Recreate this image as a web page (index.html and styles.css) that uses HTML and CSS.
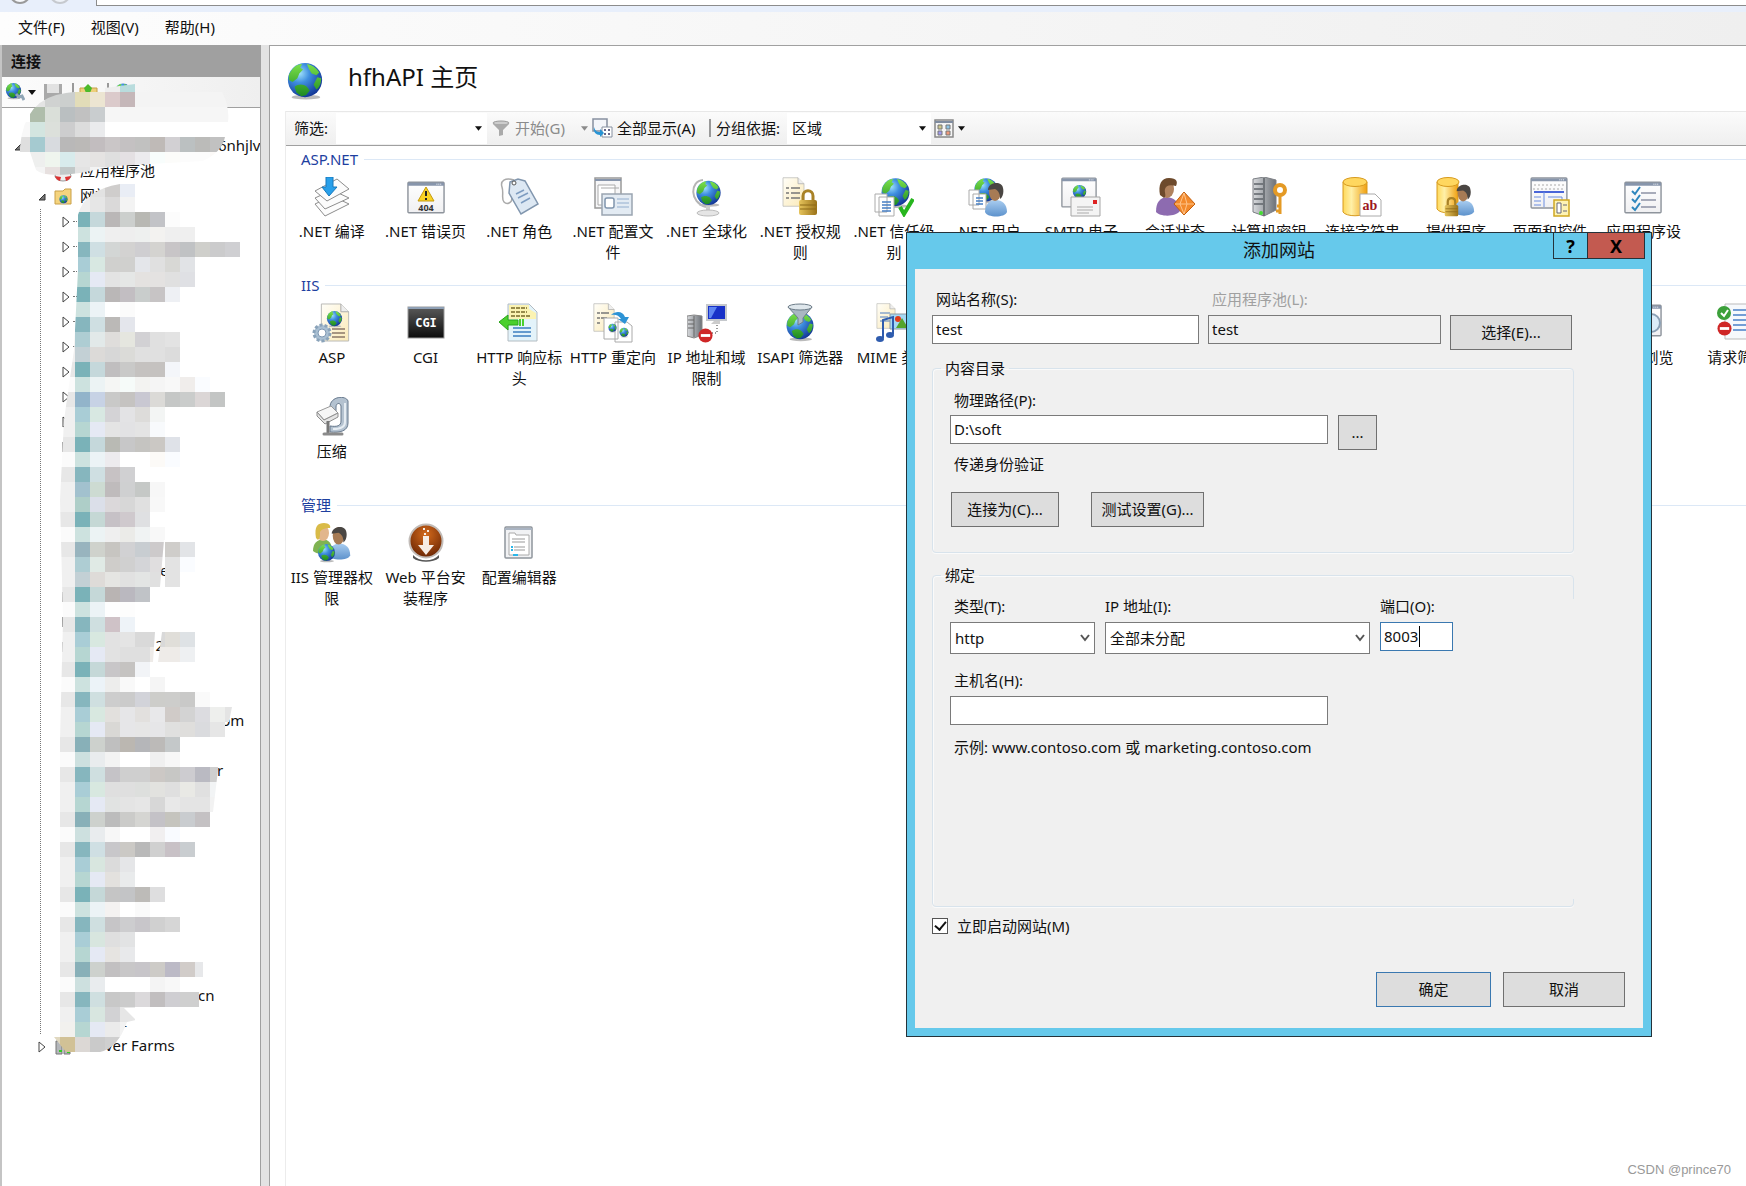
FILE: index.html
```html
<!DOCTYPE html>
<html lang="zh-CN">
<head>
<meta charset="utf-8">
<title>hfhAPI 主页</title>
<link rel="stylesheet" href="styles.css">
</head>
<body>
<svg class="defs" aria-hidden="true">
  <defs>
    <radialGradient id="sea" cx=".35" cy=".3" r=".8"><stop offset="0" stop-color="#9fe0fb"/><stop offset=".35" stop-color="#3f8fe0"/><stop offset="1" stop-color="#0c2a8c"/></radialGradient>
    <linearGradient id="land" x2="0" y2="1"><stop offset="0" stop-color="#7be04a"/><stop offset="1" stop-color="#1d8a22"/></linearGradient>
    <linearGradient id="gold" x2="1"><stop offset="0" stop-color="#ffd95a"/><stop offset=".35" stop-color="#fff0a8"/><stop offset="1" stop-color="#f0a010"/></linearGradient>
    <linearGradient id="brass" x2="1"><stop offset="0" stop-color="#e6c45c"/><stop offset="1" stop-color="#9a7218"/></linearGradient>
    <linearGradient id="steel" x2="1"><stop offset="0" stop-color="#d8dadd"/><stop offset="1" stop-color="#6d7278"/></linearGradient>
    <linearGradient id="cream" x2="1" y2="1"><stop offset="0" stop-color="#fffef8"/><stop offset="1" stop-color="#fbeab8"/></linearGradient>
    <linearGradient id="win" x2="0" y2="1"><stop offset="0" stop-color="#fff"/><stop offset="1" stop-color="#f0f0f2"/></linearGradient>
    <linearGradient id="dark" x2="0" y2="1"><stop offset="0" stop-color="#5a5a5a"/><stop offset="1" stop-color="#0c0c0c"/></linearGradient>
    <linearGradient id="shirt" x2="0" y2="1"><stop offset="0" stop-color="#a9cdf0"/><stop offset="1" stop-color="#5d92cc"/></linearGradient>
    <radialGradient id="rust" cx=".5" cy=".3" r=".7"><stop offset="0" stop-color="#d46a1c"/><stop offset="1" stop-color="#6b2604"/></radialGradient>
    <symbol id="globe" viewBox="0 0 40 40">
      <ellipse cx="21" cy="37" rx="15" ry="2.500" fill="#bbb"/>
      <circle cx="20" cy="19" r="18" fill="url(#sea)"/>
      <path d="M3 14C6 6 12 2 17 2l-2 4 3 2-4 4-2 5-5 4-4-2zM22 2c5 1 10 4 13 9l-3 3-5-2-3-5zM33 16l4 1c0 6-2 10-5 12l-3-5zM9 26c4-3 9-3 13 0l3 4-4 5-5 1-5-4z" fill="url(#land)"/>
    </symbol>
    <symbol id="person" viewBox="0 0 24 36"><path d="M1 30c0-8 5-12 11-12s11 4 11 12c-2 6-20 6-22 0z" fill="url(#shirt)"/><ellipse cx="11" cy="10" rx="6" ry="9" fill="#a77b55"/><path d="M4 8C4 0 18-2 19 6c1 4 0 9-3 11 0-5-1-8-5-10z" fill="#4a4643"/></symbol>
    <symbol id="page" viewBox="0 0 30 40"><path d="M1 1h20l8 8v30H1z" fill="url(#cream)" stroke="#b9b9b5"/><path d="M21 1v8h8" fill="#eee" stroke="#aaa"/></symbol>
    <symbol id="lock" viewBox="0 0 20 28"><path d="M5 14V8c0-7 10-7 10 0v6" fill="none" stroke="#a98226" stroke-width="3"/><rect x="1" y="12" width="18" height="15" rx="2" fill="url(#brass)"/><path d="M2 17h16M2 21h16" stroke="#8b6816"/></symbol>
    <symbol id="window" viewBox="0 0 40 34"><rect x="1" y="1" width="38" height="32" rx="1" fill="url(#win)" stroke="#8e949c" stroke-width="1.500"/><path d="M1 3h38" stroke="#8795ab" stroke-width="3"/><path d="M31 3h6" stroke="#fff" stroke-dasharray="1 1"/></symbol>
    <symbol id="nodrop" viewBox="0 0 16 16"><circle cx="8" cy="8" r="7.500" fill="#cf2626"/><path d="M3 8h10" stroke="#fff" stroke-width="3"/></symbol>
    <symbol id="drop" viewBox="0 0 8 5"><path d="M0 0h8L4 5z" fill="currentColor"/></symbol>
    <symbol id="chev" viewBox="0 0 10 8"><path d="M1 1l4 5 4-5" fill="none" stroke="#555" stroke-width="2"/></symbol>
    <symbol id="shut" viewBox="0 0 8 12"><path d="M1 1v10l6-5z" fill="#fff" stroke="#444"/></symbol>
    <symbol id="open" viewBox="0 0 8 8"><path d="M7 1v6H1z" fill="#777" stroke="#333"/></symbol>
  </defs>
</svg>

<div class="app">
  <div class="navbar">
    <svg class="nav-buttons" viewBox="0 0 90 12" aria-hidden="true"><circle cx="20" cy="-7" r="10" fill="#f6f8fb" stroke="#999" stroke-width="2"/><circle cx="60" cy="-7" r="10" fill="#eef2f8" stroke="#c6c9ce" stroke-width="2"/></svg>
    <div class="address"></div>
  </div>
  <nav class="menu">
    <button>文件(F)</button><button>视图(V)</button><button>帮助(H)</button>
  </nav>

  <div class="body">
    <aside class="sidebar">
      <h2>连接</h2>
      <div class="side-tools">
        <svg width="20" height="20" viewBox="0 0 20 20"><use href="#globe" width="17" height="18"/><path d="M11 12l3 3 3-1 2 4" fill="none" stroke="#8fa5b5" stroke-width="3"/></svg>
        <svg width="8" height="5"><use href="#drop"/></svg>
        <svg class="save" width="20" height="18" viewBox="0 0 20 18"><path d="M1 1h18v16H1z" fill="#a9a9a9"/><path d="M4 1h12v9H4z" fill="#e2e2e2"/></svg>
        <span class="bar"></span>
        <svg width="19" height="16" viewBox="0 0 19 16"><path d="M1 4h17v11H1z" fill="#edcf7b" stroke="#c79f48"/><path d="M9 0l4 4-2 5H7L5 4z" fill="#4cba2b"/></svg>
        <span class="bar"></span>
        <svg width="18" height="18"><use href="#globe"/></svg>
      </div>
      <ul class="tree">
        <li class="row root"><svg width="8" height="8"><use href="#open"/></svg><span class="host">6nhjlvi</span></li>
        <li class="row pools"><svg width="18" height="20" viewBox="0 0 18 20"><ellipse cx="9" cy="14" rx="8" ry="5" fill="#eee" stroke="#999"/><path d="M1 14q1 4 5 5l1-4zM17 14q-1 4-5 5l-1-4z" fill="#d33"/></svg><span>应用程序池</span></li>
        <li class="row sites"><svg width="8" height="8"><use href="#open"/></svg><svg width="18" height="18" viewBox="0 0 18 18"><path d="M1 3l8 0 2-2h6v15H1z" fill="#f5d47e" stroke="#c9a048"/><use href="#globe" x="5" y="7" width="9" height="9"/></svg><span>网站</span></li>
        <li><ul class="site-list" id="site-list"></ul></li>
        <li class="row farms"><svg width="8" height="12"><use href="#shut"/></svg><svg width="18" height="16" viewBox="0 0 18 16"><path d="M2 2h6v13H2zM10 5h6v10h-6z" fill="#b4b7bb" stroke="#777"/><path d="M5 12h3M13 13h3" stroke="#3c2" stroke-width="2"/></svg><span>Server Farms</span></li>
      </ul>
    </aside>

    <main class="main">
      <header class="title"><svg width="38" height="40"><use href="#globe"/></svg><h1>hfhAPI 主页</h1></header>
      <div class="panel">
        <div class="toolbar">
          <label for="filter">筛选:</label>
          <span class="combo filter"><select id="filter"><option></option></select><svg width="7" height="5"><use href="#drop"/></svg></span>
          <button class="off go"><svg width="18" height="17" viewBox="0 0 18 17"><ellipse cx="9" cy="3" rx="8" ry="2" fill="#ccc" stroke="#999"/><path d="M1 4l6 6v6l4-1v-5l6-6z" fill="#aaa"/></svg>开始(G)<svg width="7" height="5"><use href="#drop"/></svg></button>
          <button class="all"><svg width="21" height="20" viewBox="0 0 21 20"><path d="M1 1h14v12H1z" fill="#f4f6fa" stroke="#8690a0" stroke-width="1.500"/><path d="M10 9h10v10H10z" fill="#fff" stroke="#8690a0"/><path d="M12 12h2m2 0h2m-6 4h2m2 0h2" stroke="#668" stroke-width="2"/><path d="M2 9c1 4 3 5 6 5v-3l4 4-4 4v-2c-4 0-7-3-6-8z" fill="#2894d4"/></svg>全部显示(A)</button>
          <span class="bar"></span>
          <label for="group">分组依据:</label>
          <span class="combo group"><select id="group"><option>区域</option></select><svg width="7" height="5"><use href="#drop"/></svg></span>
          <button class="view" aria-label="视图"><svg width="20" height="19" viewBox="0 0 20 19"><path d="M1 1h18v17H1z" fill="#f4f4f4" stroke="#888" stroke-width="1.500"/><path d="M1 3h18" stroke="#7f8ca0" stroke-width="2"/><g stroke="#777"><path d="M4 6h4v4H4z" fill="#cdc88a"/><path d="M12 6h4v4h-4z" fill="#8cc5e8"/><path d="M4 12h4v4H4z" fill="#a09af0"/><path d="M12 12h4v4h-4z" fill="#f0987a"/></g></svg><svg width="7" height="5"><use href="#drop"/></svg></button>
        </div>

        <section>
          <h3>ASP.NET</h3>
          <div class="features">
            <a href="#"><svg viewBox="0 0 40 40"><g fill="#fcfcfc" stroke="#8d8d8d"><path d="M3 27l17-8 17 8-24 12z"/><path d="M3 21l17-8 17 8-24 11z"/><path d="M3 14L25 2l12 10-22 12z"/></g><path d="M14 0h7v10h4l-8 9-7-9h4z" fill="#29a0ea" stroke="#1879bc"/></svg><span>.NET 编译</span></a>
            <a href="#"><svg viewBox="0 0 40 40"><use href="#window" x="1" y="4" width="38" height="33"/><path d="M20 10l8 14H12z" fill="#f9d323" stroke="#c49a10"/><path d="M20 14v5m0 2v2" stroke="#222" stroke-width="2"/><text x="20" y="34" text-anchor="middle" class="i404">404</text></svg><span>.NET 错误页</span></a>
            <a href="#"><svg viewBox="0 0 40 40"><path d="M15 3C6 0 1 4 3 10s-1 12 2 15 8 1 8-4" fill="none" stroke="#aaa" stroke-width="1.500"/><path d="M11 5l8-3 7 2 13 23-17 10L10 16z" fill="#dde8f3" stroke="#8196ae" stroke-width="1.500"/><path d="M17 17l8-4m-6 8l10-5m-7 10l9-5" stroke="#7d9cc0" stroke-width="1.500"/><circle cx="15" cy="6" r="2" fill="#fff" stroke="#555"/></svg><span>.NET 角色</span></a>
            <a href="#"><svg viewBox="0 0 40 40"><path d="M2 1h26v30H2z" fill="#f6f6f7" stroke="#999" stroke-width="1.500"/><path d="M2 3h26" stroke="#8795ab" stroke-width="2"/><path d="M5 8h17v20H5zM8 11h18" fill="#fff" stroke="#aaa"/><path d="M9 17h30v21H9z" fill="#e3ebf3" stroke="#9aa5b1" stroke-width="1.500"/><rect x="12" y="21" width="9" height="10" rx="2" fill="#fff" stroke="#8095ad" stroke-width="1.500"/><path d="M24 22h12m-12 4h12m-12 4h12" stroke="#93aece"/></svg><span>.NET 配置文<br>件</span></a>
            <a href="#"><svg viewBox="0 0 40 40"><path d="M16 3C3 4 2 25 19 30" fill="none" stroke="#b5b5b5" stroke-width="2"/><use href="#globe" x="8" y="2" width="27" height="29"/><path d="M19 29h4v5h-4z" fill="#ccc"/><ellipse cx="21" cy="36" rx="11" ry="3" fill="#e5e5e5" stroke="#bbb"/></svg><span>.NET 全球化</span></a>
            <a href="#"><svg viewBox="0 0 40 40"><use href="#page" x="2" y="0" width="23" height="30"/><path d="M6 11h3m2 0h9M6 16h3m2 0h9M6 21h3m2 0h9" stroke="#777" stroke-width="1.500"/><use href="#lock" x="18" y="11" width="20" height="28"/></svg><span>.NET 授权规<br>则</span></a>
            <a href="#"><svg viewBox="0 0 40 40"><use href="#globe" x="6" y="0" width="31" height="32"/><path d="M1 17h12v18H1zM5 20h15v19H5z" fill="#fff" stroke="#aaa"/><path d="M8 25h9m-9 3h9m-9 3h9m-9 3h9" stroke="#477fc4" stroke-width="1.500"/><path d="M26 30l4 7 9-15" fill="none" stroke="#27b51e" stroke-width="4"/></svg><span>.NET 信任级<br>别</span></a>
            <a href="#"><svg viewBox="0 0 40 40"><use href="#globe" x="5" y="0" width="26" height="27"/><path d="M1 13h10v15H1zM5 17h13v15H5z" fill="#fff" stroke="#aaa"/><path d="M8 21h7m-7 3h7m-7 3h7" stroke="#477fc4" stroke-width="1.500"/><use href="#person" x="16" y="5" width="24" height="36"/></svg><span>.NET 用户</span></a>
            <a href="#"><svg viewBox="0 0 40 40"><use href="#window" x="0" y="0" width="36" height="31"/><use href="#globe" x="11" y="7" width="15" height="16"/><path d="M10 20h29v19H10z" fill="#f4f4f4" stroke="#a5a5a5"/><path d="M32 23h4v4h-4z" fill="#d22"/><path d="M16 30h16m-16 3h16m-16 3h12" stroke="#aaa"/></svg><span>SMTP 电子</span></a>
            <a href="#"><svg viewBox="0 0 40 40"><path d="M1 35c0-10 4-14 11-15 7 1 12 4 13 14-4 6-20 6-24 1z" fill="#8d6bb0"/><ellipse cx="12" cy="12" rx="7" ry="9" fill="#b0825e"/><path d="M5 18C3 8 6 1 14 1s9 4 7 8c-7-2-10 0-11 3s2 7-1 9z" fill="#6d4a2c"/><path d="M29 15l11 12-11 11-10-11z" fill="#f38a2c" stroke="#c35e0c"/><path d="M29 16l3 11-3 10-4-10zM20 27h19" fill="none" stroke="#ffc48a"/></svg><span>会话状态</span></a>
            <a href="#"><svg viewBox="0 0 40 40"><path d="M4 2l11-2 12 3v30l-12 6-11-4z" fill="url(#steel)" stroke="#7c7f84"/><path d="M15 1v38M5 7h9M5 12h9M5 17h9M5 22h9M5 27h9" stroke="#5f646a" stroke-width="1.500"/><circle cx="12" cy="36" r="2" fill="#4d3"/><circle cx="31" cy="13" r="5" fill="none" stroke="#e49a25" stroke-width="4"/><path d="M31 19v18m0-3h-4m4-5h-3" stroke="#e49a25" stroke-width="3"/></svg><span>计算机密钥</span></a>
            <a href="#"><svg viewBox="0 0 40 40"><path d="M1 5v30c3 5 21 5 24 0V5z" fill="url(#gold)" stroke="#d79a1e"/><ellipse cx="13" cy="5" rx="12" ry="4.500" fill="#ffd75f" stroke="#d79a1e"/><path d="M18 17h15l6 6v16H18z" fill="#fff" stroke="#aaa"/><text x="28" y="33" text-anchor="middle" class="iab">ab</text></svg><span>连接字符串</span></a>
            <a href="#"><svg viewBox="0 0 40 40"><path d="M1 5v27c3 5 18 5 21 0V5z" fill="url(#gold)" stroke="#d79a1e"/><ellipse cx="12" cy="5" rx="11" ry="4.500" fill="#ffd75f" stroke="#d79a1e"/><use href="#person" x="16" y="7" width="24" height="33"/><use href="#lock" x="8" y="19" width="15" height="21"/></svg><span>提供程序</span></a>
            <a href="#"><svg viewBox="0 0 40 40"><use href="#window" x="0" y="0" width="38" height="32"/><path d="M4 8h30M3 12h32" stroke="#aaa" stroke-dasharray="2 2"/><path d="M4 15h30" stroke="#4a66d8" stroke-width="2"/><path d="M4 20h7m-7 4h7m-7 4h7M14 15v15m4-10h14v9" fill="none" stroke="#6b8de0"/><rect x="24" y="23" width="15" height="16" fill="#fdf3b5" stroke="#cfa822" stroke-width="1.500"/><path d="M27 26h4v10h-4zM33 28h4m-4 6h4" fill="#fff" stroke="#667"/></svg><span>页面和控件</span></a>
            <a href="#"><svg viewBox="0 0 40 40"><use href="#window" x="1" y="4" width="38" height="33"/><path d="M9 14l3 3 5-7M9 22l3 3 5-7M9 30l3 3 5-7" fill="none" stroke="#2f87bd" stroke-width="2"/><path d="M18 16h15m-15 7h15m-15 7h15" stroke="#8d93a5" stroke-width="1.500"/></svg><span>应用程序设<br>置</span></a>
          </div>
        </section>

        <section>
          <h3>IIS</h3>
          <div class="features">
            <a href="#"><svg viewBox="0 0 40 40"><use href="#page" x="7" y="0" width="32" height="39"/><use href="#globe" x="14" y="7" width="17" height="18"/><path d="M20 26h13m-13 4h13m-13 4h13" stroke="#8a7868" stroke-width="1.500"/><circle cx="10" cy="30" r="8" fill="#a9bfd2" stroke="#8aa3ba" stroke-width="3" stroke-dasharray="3 2"/><circle cx="10" cy="30" r="4" fill="#fff" stroke="#7e98b2"/></svg><span>ASP</span></a>
            <a href="#"><svg viewBox="0 0 40 40"><rect x="2" y="4" width="36" height="31" fill="url(#dark)" stroke="#999"/><path d="M2 5h36" stroke="#8fa0b5" stroke-width="2"/><text x="20" y="24" text-anchor="middle" class="icgi">CGI</text></svg><span>CGI</span></a>
            <a href="#"><svg viewBox="0 0 40 40"><path d="M9 1h21l8 8v29H9z" fill="#e3f3fa" stroke="#b3bcc2"/><path d="M10 2h20v4l7 4v6H10z" fill="#fbf3b2"/><path d="M12 5h16M12 9h16m-16 4h20" stroke="#77692a" stroke-width="1.500" stroke-dasharray="4 1"/><path d="M14 25h18m-18 4h18m-18 4h18" stroke="#3d7fc0" stroke-width="1.500"/><path d="M9 12v5h10v5H9v5L0 19z" fill="#4bd02d" stroke="#2ba51a"/><path d="M21 16v7m3-7v7" stroke="#4bd02d" stroke-width="2"/></svg><span>HTTP 响应标<br>头</span></a>
            <a href="#"><svg viewBox="0 0 40 40"><use href="#page" x="0" y="0" width="22" height="29"/><path d="M4 10h3m1 0h8M4 15h3m1 0h6M4 20h3" stroke="#777" stroke-width="1.500"/><path d="M11 15h14v21H11zM22 19h12l5 4v16H22z" fill="#fff" stroke="#aaa"/><use href="#globe" x="15" y="20" width="9" height="10"/><use href="#globe" x="26" y="24" width="10" height="11"/><path d="M18 12c6-5 12-3 14 2h4l-4 7-7-5h3c-2-4-6-5-10-4z" fill="#2d93d5"/></svg><span>HTTP 重定向</span></a>
            <a href="#"><svg viewBox="0 0 40 40"><path d="M0 13l7-1 8 1v19l-8 3-7-2z" fill="url(#steel)" stroke="#888"/><path d="M1 17h6m-6 4h6m-6 4h6M7 13v21" stroke="#666"/><rect x="20" y="2" width="19" height="15" fill="#1831c8" stroke="#c5c8cc" stroke-width="2"/><path d="M22 4h8l-6 11h-2z" fill="#5f86f2"/><path d="M27 18h6v3h-9" fill="#ccc"/><path d="M30 22v8h-6" fill="none" stroke="#333" stroke-dasharray="1 2"/><use href="#nodrop" x="11" y="25" width="15" height="15"/></svg><span>IP 地址和域<br>限制</span></a>
            <a href="#"><svg viewBox="0 0 40 40"><use href="#globe" x="5" y="8" width="30" height="31"/><path d="M8 4l10 11v7l5-3v-4L32 4z" fill="#a9b7c2" stroke="#6d7c88"/><ellipse cx="20" cy="4" rx="12" ry="3" fill="#dfe7ec" stroke="#6d7c88"/></svg><span>ISAPI 筛选器</span></a>
            <a href="#"><svg viewBox="0 0 40 40"><use href="#page" x="2" y="0" width="20" height="26"/><path d="M6 10h10M6 14h8M6 18h10" stroke="#4d7dc0"/><path d="M16 11h24v15H16z" fill="#a5d8f5" stroke="#8f9aa2"/><circle cx="24" cy="16" r="3" fill="#e23a1a"/><path d="M22 25l6-10 6 10z" fill="#54a52b"/><path d="M9 35V17l10-3v17" fill="none" stroke="#2f5cae" stroke-width="2"/><ellipse cx="6" cy="36" rx="4" ry="3" fill="#2f5cae"/><ellipse cx="16" cy="32" rx="4" ry="3" fill="#2f5cae"/></svg><span>MIME 类型</span></a>
            <i></i><i></i><i></i><i></i><i></i><i></i><i></i>
            <a href="#"><svg viewBox="0 0 40 40"><use href="#window" x="1" y="1" width="38" height="33"/><circle cx="28" cy="20" r="9" fill="#dcecf8" stroke="#8aa0b5" stroke-width="2"/></svg><span>目录浏览</span></a>
            <a href="#"><svg viewBox="0 0 40 40"><path d="M8 1h30v35H8z" fill="#f6f9fc" stroke="#bbb"/><path d="M16 7h22m-22 5h22m-22 5h22m-22 5h22m-22 5h22" stroke="#4a80c8" stroke-width="1.500"/><circle cx="7" cy="10" r="7" fill="#3ca03a"/><path d="M4 10l3 3 4-6" stroke="#fff" fill="none" stroke-width="2"/><use href="#nodrop" x="0" y="18" width="15" height="15"/></svg><span>请求筛选</span></a>
            <a href="#"><svg viewBox="0 0 40 40"><path d="M18 10C18-1 34-2 36 4v22c0 8-8 10-18 9v-6c7 1 11 0 11-5V9c-1-4-5-3-5 1v5h-6z" fill="#b4c2d0" stroke="#66788c"/><path d="M33 6v19c0 5-5 7-12 7" fill="none" stroke="#e6edf3" stroke-width="2"/><path d="M5 15l14-6 7 7-14 7z" fill="#f6f6f6" stroke="#999"/><path d="M5 15v4l8 8 13-7v-4l-14 7z" fill="#e4e4e4" stroke="#8d8d8d"/><path d="M16 24v13" stroke="#777" stroke-width="3"/><path d="M12 37h18" stroke="#8b8b8b" stroke-width="3" stroke-linecap="round"/></svg><span>压缩</span></a>
          </div>
        </section>

        <section>
          <h3>管理</h3>
          <div class="features">
            <a href="#"><svg viewBox="0 0 40 40"><g><path d="M1 28c0-8 4-11 10-12 6 1 9 4 9 12-4 4-15 4-19 0z" fill="#7fb352"/><ellipse cx="11" cy="10" rx="6" ry="8" fill="#e2b68c"/><path d="M4 15C2 3 6 0 12 0c5 0 7 3 6 5-6 0-9 2-10 4 0 4 0 6-2 8z" fill="#d9bb48"/></g><use href="#person" x="15" y="3" width="25" height="35"/><use href="#globe" x="5" y="20" width="19" height="20"/></svg><span>IIS 管理器权<br>限</span></a>
            <a href="#"><svg viewBox="0 0 40 40"><path d="M7 32c6 7 20 7 26 0v3c-6 5-20 5-26 0z" fill="#555"/><circle cx="20" cy="18" r="16.500" fill="url(#rust)" stroke="#c2bcb8" stroke-width="2"/><path d="M17 13h6v9h5l-8 10-8-10h5z" fill="#f6ece4"/><path d="M17 5h2v2h-2zM21 7h2v2h-2zM18 10h2v2h-2z" fill="#f6ece4"/></svg><span>Web 平台安<br>装程序</span></a>
            <a href="#"><svg viewBox="0 0 40 40"><rect x="6" y="4" width="27" height="31" rx="1" fill="#f1f2f4" stroke="#8f959c" stroke-width="1.500"/><path d="M6 6h27" stroke="#aab4c2" stroke-width="2"/><path d="M10 13v-3h6l1 2h13v20H10z" fill="#fff" stroke="#aaa"/><path d="M13 16h13M13 19h13m-11 5h11m-11 3h11" stroke="#999"/><path d="M12 24h2m-2 3h2m0 5h5" stroke="#2bb6e8" stroke-width="2"/></svg><span>配置编辑器</span></a>
          </div>
        </section>
      </div>
    </main>
  </div>

  <svg class="mosaic" id="mosaic" width="260" height="1070" aria-hidden="true">
    <defs>
      <clipPath id="smudge-top"><path d="M20 147Q24 98 66 93L135 84V91L222 92Q230 108 228 122L225 137Q222 152 203 161L115 166 80 173Q45 178 36 170L30 152H20z"/></clipPath>
      <clipPath id="smudge-side">
        <path d="M120 184Q84 190 78 215L78 270 74 350 64 420 60 500 63 620 60 740V1037L54 1037 66 1052H100Q118 1048 127 1022L136 1020 124 1008 199 1007V992L203 977V960H211V830L213 812 218 770 219 737H226L232 707V692H150L153 662 155 632H150V587H160L164 540H245V184z"/>
        <path d="M165 540H200V590H165zM162 632H200V662H158zM150 662H215V695H150zM150 587H200V632H150z"/>
      </clipPath>
    </defs>
    <g id="mosaic-top" clip-path="url(#smudge-top)"></g>
    <g id="mosaic-side" clip-path="url(#smudge-side)"></g>
  </svg>

  <div class="dialog" role="dialog" aria-labelledby="dlg-title">
    <div class="dlg-head">
      <h2 id="dlg-title">添加网站</h2>
      <div class="dlg-buttons"><button>?</button><button class="close">X</button></div>
    </div>
    <form class="dlg-body">
      <div class="names">
        <label for="site">网站名称(S):</label><label for="pool" class="dim">应用程序池(L):</label><span></span>
        <input id="site" value="test"><input id="pool" value="test" readonly><button type="button">选择(E)...</button>
      </div>
      <fieldset class="content">
        <legend>内容目录</legend>
        <label for="path">物理路径(P):</label>
        <div class="line path"><input id="path" value="D:\soft"><button type="button">...</button></div>
        <p>传递身份验证</p>
        <div class="line creds"><button type="button">连接为(C)...</button><button type="button">测试设置(G)...</button></div>
      </fieldset>
      <fieldset class="binding">
        <legend>绑定</legend>
        <div class="bind">
          <label for="type">类型(T):</label><label for="ip">IP 地址(I):</label><label for="port">端口(O):</label>
          <span class="combo"><select id="type"><option>http</option></select><svg width="10" height="8"><use href="#chev"/></svg></span>
          <span class="combo"><select id="ip"><option>全部未分配</option></select><svg width="10" height="8"><use href="#chev"/></svg></span>
          <span class="port"><input id="port" value="8003"><i class="caret"></i></span>
        </div>
        <label for="hostname">主机名(H):</label>
        <input id="hostname" class="host-input">
        <p class="hint">示例: www.contoso.com 或 marketing.contoso.com</p>
      </fieldset>
      <label class="check"><input type="checkbox" checked>立即启动网站(M)</label>
      <div class="actions"><button type="button" class="ok">确定</button><button type="button" class="cancel">取消</button></div>
    </form>
  </div>
  <div class="watermark">CSDN @prince70</div>
</div>
<script src="tree.js"></script>
</body>
</html>
```
FILE: tree.js
```js
// Site rows: index -> [indent of the readable tail, tail text]
const tails = { 15: [81, "e"], 18: [68, "12"], 21: [135, "com"], 23: [138, "r"], 32: [119, "cn"], 33: [33, "注"] };
const list = document.getElementById("site-list");
for (let i = 1; i <= 33; i++) {
  const [indent, text] = tails[i] || [0, ""];
  const li = document.createElement("li");
  li.className = "row";
  li.innerHTML = '<svg width="8" height="12"><use href="#shut"/></svg><b></b>' +
    (text ? `<span style="margin-left:${indent}px">${text}</span>` : "");
  list.append(li);
}

// Redaction blocks: one line per 15px row, "startX: colours"
const CELL = 15;
const topRows = [
  "105:eee b9dcdd",
  "30:e4e4e4 d0d2d1 cccfce e2dcb8 ece5d2 dbcacb c5b7b9 f4f4f4 f4f4f4 f4f4f4 f4f4f4 f4f4f4 f4f4f4 f4f4f4",
  "15:fff afbdab dadfd9 babfc1 c1c1c1 c9cdcf f6f6f6 f6f6f6 f6f6f6 f6f6f6 f6f6f6 f6f6f6 f6f6f6 f6f6f6 f6f6f6",
  "15:f8f8f8 d3e5e0 dce0db cdcdce dcdcdc eaebed fff fff fff fff fff fff fff fff fff",
  "15:dfdfdf a5cad0 d8dbdf b9b8b8 bbb9b7 c2bdbf cac6c7 c4c1c2 c1c1c0 bfbab7 d2d0d3 bbc0c1 bbbbb9 c1c1c1",
  "30:eeefee eff5ee d8ebec e6e6e6 e5e3e2 dfdfdf e4e0e3 ecebee f8fdfc fcfcfa fcfcfc fcfcfc fcfaf8",
  "30:f4f4f4 e7e0df c2c8c8 e3e3e3 f3f3f3 f8f8f8"
];
const sideRows = [
  "90:e2e2e2 cfcdcc e9edf5",
  "75:eee e6e6e6 dad9d9 f3f3f3",
  "75:7ab2b8 c5d8db bab7b7 cccfcd b8b8b3 c2c3c7 fcfcfc",
  "75:cde2df ecf3f4 efefef eee eef0ef f3f2f0 efefef efefef",
  "75:86b6be cfdfe3 d3d6d5 d3d2d1 cfced1 d4d3d0 c8c5c7 c0c2c4 cfcfcb cbcbcc cfcfd2",
  "75:a9cdd6 d8e8e2 d0d0ce d0d0ce e4e6ea e0e0e0 d8d8d5 e1e3e6",
  "75:b6d6d2 e5e9f4 e3e3e3 e5e7e6 e4e2e0 e4e2e1 e0e0e0 dfe0e4",
  "75:7ab2b8 c5d8db bab7b7 c2bec2 c9cdcc c7c4c5 eef0f4",
  "75:cde2df ecf3f6 fff fbfbfb",
  "60:e7e7e7 86b6be cfdfe2 bbb9b7 e4e6ec",
  "60:f0f0f0 aecdd3 e2e9e9 dfdddb e5e6df d2d1d4 e0e0e0 e3e3e3",
  "60:f0f0f0 c3d0d5 dcdad8 d7d7d7 dbdbd8 e0e0e0 e0e0e0 dcdcdc",
  "60:e7e7e7 7ab2b8 c5d8db c0bebf c9c9c8 c5c2c0 c5c2c0 f4f6fa",
  "60:fbfbfb cde2df ecf3f4 f5f6f4 f6fbf9 f3f3f1 f5f5f5 f8f8f8 f0edeb fafcff",
  "60:e7e7e7 92b4ca c7d2e5 c9c9c8 c5c3c1 c9c8d2 dbdad7 c5c7c6 cacccb dbd6d6 c3c5c4",
  "60:f0f0f0 a9cdd6 d8e8e2 d4d3d6 e3e3e5 dddcda f3f5f4",
  "60:f0f0f0 b6d6d2 e5e9f4 e4e4e4 e2e2e4 e4e4e4 f8fafc",
  "60:e7e7e7 7ab2b8 c5d8db b9bab4 c7c7c8 c5c4c1 cbc8c4 dfe2e8",
  "60:fbfbfb cde2df ecf3f6 edebee fff fff fcfaf7 fafcff",
  "60:e7e7e7 86b6be cfdfe2 c7c2c4 d0d0d2",
  "60:f0f0f0 a2c1ce cddbd2 bfbbbc cfd0d1 c5c8c6 f7f7f7",
  "60:f0f0f0 aecec8 dbdfe9 dbd8da d7d7d7 e0e0e0 f8f8f8",
  "60:e7e7e7 7ab2b8 c5d8d5 c6c1c6 cfc9cd dfe0e2",
  "60:fbfbfb cde2df ecf3f4 efefef ebebe8 f0f3f3 f8f8f8",
  "60:e7e7e7 98b4be cfd2cc c7c5c1 d1d1d3 c8cdd1 cdcacb cfcdca e2e4e7",
  "60:f0f0f0 aecdd3 e0eae5 cfcdca d0d0d0 d4d5d8 e0dedf e3e3e3 fafcff",
  "60:f0f0f0 c3d0d5 dedbd8 e5e5e2 e1e1e1 e3e5e4 e0e0e0 e3e3e3",
  "60:e7e7e7 7ab2b8 c5d8d8 b9b4b3 bab8bf c0c3c7",
  "60:fbfbfb cde2df ecf3f6 fefefe fdfdfd",
  "60:e7e7e7 86b6be cfdfe0 cfc2c7 eef3f8",
  "60:f0f0f0 a9cdd6 d8e8e0 e2e2e2 e4e4e4 d9d9d9 d9d9d9 e0ded9 dee2e5",
  "60:f0f0f0 b6d6d2 e5e9f4 e2e2e2 dfdfdf dfdfdf eeebe8 eeebe8 eef0f2",
  "60:e7e7e7 7ab2b8 c5d8d8 c8c6c8 c5c3c1 f2f4f7",
  "60:fbfbfb cde2df ecf3f8 ededec f9f9f9 fff f5f5f5",
  "60:e7e7e7 86b6be cfdfe0 cdcdcd cbcbcb d2d3d9 cdcdca cdcdcb c9c9c8 fafafa",
  "60:f0f0f0 a9cdd6 d8e8e0 e2e0dd e6e6e8 e2e0de e8e8ea d0cbc8 d3d3d3 dcdce0 eeefed e4e4e4",
  "60:f0f0f0 b6d6d2 e5e9f4 d9d8d5 e6e6e8 e6e6e6 e6e6e8 e0e0df dfdedc dadbde e6e6e6",
  "60:e7e7e7 88b0b8 cdd1cd bfbfbf bbb7b1 b5b6b9 bcbab8 c4c8c9",
  "60:fbfbfb cde0df e9ecee f3f3f3 fff fff f0f0f0 f7f7f7",
  "60:e7e7e7 86b6be cfdfe0 c5c3c7 cfcfcf cfcfcf ccc8c5 c7c7c5 cdccd0 babac2 cfcfcf",
  "60:f0f0f0 a9cdd6 d8e8e0 dfdfdf dfdfdf dddfdd e2e2df dfdfdf e9e9e5 e0e0e0 f2f4f5",
  "60:f0f0f0 b6d6d2 e5e9f4 e1e3e2 e4e4e4 e6e6e6 d7d7d7 e8e8e8 e4e4e4 e4e4e4 f2f2f2",
  "60:e7e7e7 88b0b8 cdd1cd bcbcbc cbcbc9 d5d5d2 c4c2c7 c5c4be c9cccf c4c1c3",
  "60:fbfbfb cde0df e9ecee f7f7f7 fff fff f1eff0 f9fbff",
  "60:e7e7e7 86b6be cfdfe3 c8c7ca cbc9c5 b9b9b9 d0d0d0 c8c1c6 c9cdd0",
  "60:f0f0f0 a9cdd6 d8e6df dbdbdb e5e6e8",
  "60:f0f0f0 b6d6d2 e5e9f4 e3e1de e9ebec",
  "60:e7e7e7 7ab2b8 c5d8d8 c5c5c5 c3c4c6 bdbbb8 dededf",
  "60:fbfbfb cde2df ecf3f6 f4f2f1 fff fafafa",
  "60:e7e7e7 86b6be cfdfe0 c6c5c7 cdcdcf c8c6ca d0d0d0 d6d6d6",
  "60:f0f0f0 a9cdd6 d8e6df dfdfdf e2e3e4",
  "60:f0f0f0 b6d6d2 e5e9f4 e6e4e1 e8e9eb",
  "60:e7e7e7 88b0b8 cdd1cd c2c0c1 c8c7c8 c7c5c9 cdcbc7 bcbac6 d1ccc9 e7e8ea",
  "60:fbfbfb cde0df e9ecee fff fff fff f4f4f4 f8f8f8",
  "60:e7e7e7 86b6be cfdfe0 c8c8c8 cbcbcb dbd9db c1bebf cfced2 cfcfcf cfcfcf",
  "60:f0f0f0 a9cdd6 d8e6e0 d2d2d4 e6e6e6",
  "60:f2f1ee b6d6d2 e5e9f4 ebebeb f2f2f2",
  "45:e0d8c0 d1c196 dcd8d5 cacaca cfcfcf"
];
function paint(id, rows, top) {
  let out = "";
  rows.forEach((row, r) => {
    const [x, cells] = row.split(":");
    cells.split(" ").forEach((c, i) => {
      out += `<rect x="${+x + i * CELL}" y="${top + r * CELL}" width="${CELL}" height="${CELL}" fill="#${c}"/>`;
    });
  });
  document.getElementById(id).innerHTML = out;
}
paint("mosaic-top", topRows, 77);
paint("mosaic-side", sideRows, 182);
```
FILE: styles.css
```css
* { box-sizing: border-box; }
html, body { height: 100%; margin: 0; }
body { font: 15px/20px "Noto Sans", "Noto Sans CJK SC", sans-serif; color: #111; overflow: hidden; }
h1, h2, h3, p, ul { margin: 0; padding: 0; font-weight: normal; }
ul { list-style: none; }
button, input, select { font: inherit; color: inherit; margin: 0; }
button { padding: 0; white-space: nowrap; }
a { color: inherit; text-decoration: none; }
svg { display: block; flex: none; }
.defs { position: absolute; width: 0; height: 0; }

.app { position: relative; display: flex; flex-direction: column; min-height: 100vh; background: #e3e3e3; }

.navbar { display: flex; height: 12px; background: #e8effb; }
.nav-buttons { width: 90px; height: 12px; margin-right: 6px; }
.address { flex: 1; height: 6px; background: #fff; border: solid #8c8c8c; border-width: 0 0 1px 1px; }
.menu { display: flex; gap: 26px; height: 33px; padding: 0 18px 4px; background: linear-gradient(90deg, #fdfdfd, #efefef); align-items: center; }
.menu button { border: 0; background: none; }

.body { flex: 1; display: flex; gap: 8px; min-height: 0; }
.sidebar { width: 261px; flex: none; background: #fff; border: solid #a0a0a0; border-width: 0 1px 0 2px; border-left-color: #c4c4c4; overflow: hidden; }
.sidebar h2 { height: 32px; padding-left: 9px; line-height: 32px; font-size: 15px; font-weight: bold; background: #a0a0a0; }
.side-tools { display: flex; align-items: center; gap: 3px; height: 31px; padding-left: 3px; background: linear-gradient(90deg, #fcfcfc, #efefef); border-bottom: 1px solid #a0a0a0; }
.save { margin-left: 4px; }
.bar { width: 2px; height: 18px; background: #999; margin-right: 5px; }
.side-tools .bar { margin: 0 2px 0 6px; }
.tree { padding-top: 26px; }
.row { display: flex; align-items: center; height: 25px; white-space: nowrap; }
.row span { padding-bottom: 4px; }
.root { padding-left: 12px; }
.host { margin-left: 196px; }
.pools { padding-left: 52px; gap: 8px; }
.sites { padding-left: 36px; gap: 8px; }
.site-list { margin-left: 38px; padding-left: 21px; border-left: 1px dotted #777; }
.site-list b { width: 6px; margin-left: 3px; border-top: 1px dotted #777; }
.farms { padding-left: 36px; gap: 8px; }
.farms span { margin-left: 2px; }

.main { flex: 1; display: flex; flex-direction: column; min-width: 0; padding-left: 15px; background: #fff; border: solid #a0a0a0; border-width: 1px 0 0 1px; overflow: hidden; }
.title { display: flex; gap: 24px; height: 65px; padding: 15px 0 0 1px; }
.title h1 { font-size: 24px; line-height: 32px; }
.panel { flex: 1; border-left: 1px solid #ececec; }
.toolbar { display: flex; align-items: center; height: 35px; padding: 0 0 1px 8px; background: linear-gradient(#fbfbfb, #efefef); border-top: 1px solid #e8e8e8; border-bottom: 1px solid #a0a0a0; }
.toolbar button { display: flex; align-items: center; border: 0; background: none; }
.combo { display: grid; align-items: center; }
.combo > * { grid-area: 1 / 1; }
.combo > svg { justify-self: end; margin-right: 5px; pointer-events: none; }
.combo select { appearance: none; width: 100%; border: 0; border-radius: 0; background: #fff; padding: 0 5px; outline: 0; }
.toolbar select { height: 31px; }
.toolbar .filter { width: 151px; margin-left: 8px; }
.toolbar .group { width: 144px; margin: 0 3px 0 7px; }
.toolbar .off { color: #8b8b8b; }
.go { width: 96px; gap: 5px; margin: 0 4px 0 5px; }
.go svg:last-child { margin-left: auto; }
.all { gap: 4px; width: 117px; }
.view { gap: 4px; }

section { padding: 1px 0 9px; }
section h3 { display: flex; align-items: center; gap: 6px; height: 24px; padding-left: 15px; margin-bottom: 6px; color: #1e3f9f; font-size: 15px; }
section h3::after { content: ""; flex: 1; height: 1px; background: #dce8f6; }
/* sixteen columns, the last one running past the window edge */
.features { display: grid; grid-template-columns: repeat(16, minmax(0, 1fr)); row-gap: 8px; margin: 0 -38px 0 -1px; }
.features a { display: flex; flex-direction: column; align-items: center; gap: 4px; height: 86px; line-height: 21px; text-align: center; white-space: nowrap; }
.features svg { width: 40px; height: 40px; }
.i404 { font: bold 9px "Open Sans", sans-serif; fill: #333; }
.iab { font: bold 14px "Liberation Serif", serif; fill: #9c1620; }
.icgi { font: bold 12px "DejaVu Sans Mono", monospace; fill: #fff; }

.mosaic { position: absolute; left: 0; top: 0; }

.dialog { position: absolute; top: 232px; right: 94px; width: 746px; padding: 0 8px 8px; background: #66c9eb; border: 1px solid #24323a; }
.dlg-head { position: relative; height: 36px; }
.dlg-head h2 { font-size: 18px; line-height: 34px; text-align: center; }
.dlg-buttons { position: absolute; top: -1px; right: -2px; display: flex; }
.dlg-buttons button { width: 35px; height: 27px; margin-left: -1px; border: 1px solid #24323a; background: #66c9eb; font-size: 18px; font-weight: bold; line-height: 20px; color: #000; }
.dlg-buttons .close { width: 58px; background: #c35a50; }
.dlg-body { padding: 20px 18px 21px 17px; background: #f0f0f0; }
.dlg-body label, .dlg-body p { display: block; padding-left: 4px; }
.dlg-body input { height: 29px; padding: 0 3px 2px; border: 1px solid #7a7a7a; border-radius: 0; background: #fff; outline: 0; min-width: 0; }
.dlg-body button { height: 35px; padding-bottom: 2px; border: 1px solid #707070; border-radius: 0; background: #ddd; }
.dlg-body input[readonly] { background: #f0f0f0; }
.dlg-body .dim { color: #a0a0a0; }
.names { display: grid; grid-template-columns: 267px 233px 122px; column-gap: 9px; row-gap: 6px; align-items: start; margin-bottom: 8px; }
fieldset { position: relative; width: 642px; margin: 0 0 12px; padding: 0 17px; border: 1px solid #d8e3ec; border-radius: 4px; box-shadow: inset 1px 1px #fafafa, 0 1px #fafafa; }
legend { padding: 0 4px; margin-left: -9px; }
.line { display: flex; align-items: flex-start; }
.content { padding-top: 12px; padding-bottom: 25px; }
.path { gap: 10px; margin: 5px 0 4px; }
.path input { width: 378px; }
.path button { width: 39px; }
.creds { gap: 32px; margin: 18px 0 0 1px; }
.creds button { width: 108px; }
.creds button + button { width: 113px; }
.binding { height: 342px; padding-top: 11px; margin-bottom: 9px; }
.binding::after { content: ""; position: absolute; right: -1px; top: 14px; bottom: 7px; width: 1px; background: #f0f0f0; }
.bind { display: grid; grid-template-columns: 145px 265px 73px; column-gap: 10px; row-gap: 6px; align-items: start; margin-bottom: 16px; }
.bind label + label { padding-left: 0; }
.bind select { height: 32px; border: 1px solid #7a7a7a; padding: 0 4px; }
.port { position: relative; display: grid; }
.port input { border-color: #3a78b0; }
.caret { position: absolute; left: 39px; top: 4px; width: 1px; height: 21px; background: #000; }
.host-input { display: block; width: 378px; margin: 6px 0 12px; }
.dlg-body .check { display: flex; align-items: center; gap: 9px; height: 20px; padding: 0; }
.check input { appearance: none; width: 16px; height: 16px; padding: 0; display: grid; place-items: center; border-color: #555; }
.dlg-body .check input { height: 16px; padding: 0; }
.check input:checked::before { content: ""; width: 5px; height: 9px; margin-bottom: 3px; border: solid #111; border-width: 0 2px 2px 0; transform: rotate(40deg); }
.actions { display: flex; justify-content: flex-end; gap: 12px; margin-top: 36px; }
.dlg-body .ok { width: 115px; border-color: #3a78b0; }
.cancel { width: 122px; }
.watermark { position: absolute; right: 15px; bottom: 6px; color: #999; font: 13px/20px "Liberation Sans", sans-serif; }
```
